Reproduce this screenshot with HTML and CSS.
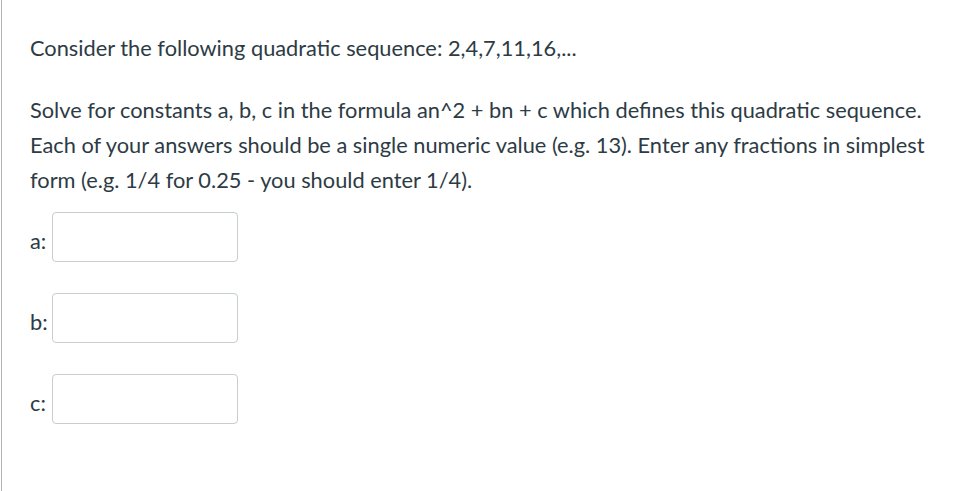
FILE: index.html
```html
<!DOCTYPE html>
<html>
<head>
<meta charset="utf-8">
<link rel="stylesheet" href="styles.css">
</head>
<body>
<div class="question">
  <p class="intro">Consider the following quadratic sequence: 2,4,7,11,16,...</p>
  <p class="text">Solve for constants a, b, c in the formula an^2 + bn + c which defines this quadratic sequence. Each of your answers should be a single numeric value (e.g. 13). Enter any fractions in simplest form (e.g. 1/4 for 0.25 - you should enter 1/4).</p>
  <div class="answers">
    <div class="row"><span class="label">a:</span><span class="box"></span></div>
    <div class="row"><span class="label">b:</span><span class="box"></span></div>
    <div class="row"><span class="label">c:</span><span class="box"></span></div>
  </div>
</div>
</body>
</html>
```
FILE: styles.css
```css
html, body {
  margin: 0;
  padding: 0;
  background: #fff;
}
body {
  font-family: Lato, "Open Sans", sans-serif;
  font-size: 21.8px;
  color: #2d3b45;
}
.question {
  margin-left: 1px;
  border-left: 1px solid #b3b3b3;
  min-height: 491px;
  box-sizing: border-box;
  padding: 30px 30px 0 28px;
}
.intro {
  margin: 0;
  line-height: 35px;
}
.text {
  margin: 27px 0 0 0;
  line-height: 35px;
  width: 912px;
}
.answers {
  margin-top: 15px;
  display: flex;
  flex-direction: column;
  gap: 31px;
}
.row {
  display: flex;
  align-items: center;
  gap: 5px;
}
.label {
  width: 17px;
  padding-top: 6px;
}
.box {
  display: block;
  width: 184px;
  height: 48px;
  border: 1px solid #c7cdd1;
  border-radius: 4px;
  background: #fff;
}
```
